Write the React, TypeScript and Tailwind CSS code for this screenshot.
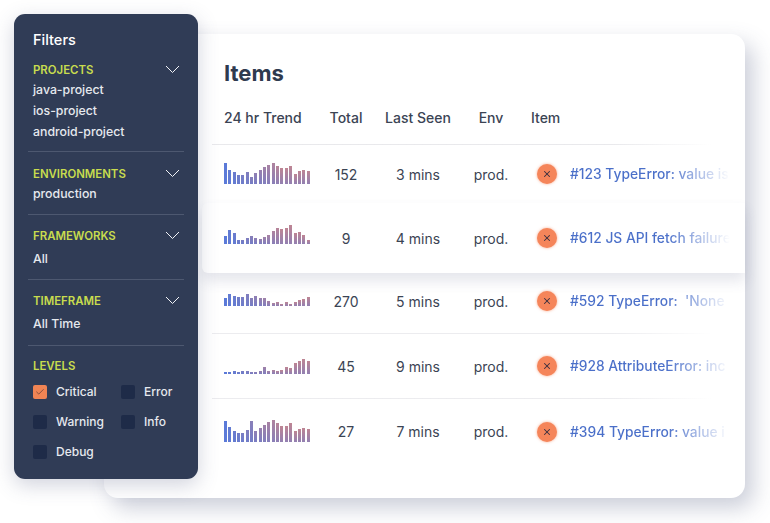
import { X, Check } from 'lucide-react';

interface Row {
    trend: number[];
    total: number;
    seen: string;
    title: string;
    lift: string;
    height: string;
}

const rows: Row[] = [
    { trend: [21, 14, 12, 9, 9, 12, 7, 11, 14, 17, 19, 21, 18, 16, 16, 18, 10, 13, 14, 13], total: 152, seen: '3 mins', title: '#123 TypeError: value is', lift: 'mb-[4px]', height: 'h-[58px]' },
    { trend: [8, 14, 11, 4, 4, 6, 8, 6, 5, 7, 9, 13, 16, 15, 16, 19, 11, 12, 9, 4], total: 9, seen: '4 mins', title: '#612 JS API fetch failure', lift: 'mb-[12px]', height: 'relative z-10 h-[70px] -ml-[22px] pl-[22px] bg-white rounded-l-[6px] shadow-[0_8px_14px_rgba(70,78,120,0.14)]' },
    { trend: [8, 12, 10, 9, 9, 12, 8, 10, 8, 8, 5, 3, 4, 2, 4, 2, 4, 6, 7, 9], total: 270, seen: '5 mins', title: "#592 TypeError:  'None", lift: 'mb-[14px]', height: 'h-[60px] pb-[4px]' },
    { trend: [2, 2, 3, 2, 3, 3, 2, 2, 3, 7, 3, 4, 3, 4, 7, 6, 11, 13, 15, 13], total: 45, seen: '9 mins', title: '#928 AttributeError: inc', lift: 'mb-[8px]', height: 'h-[64px]' },
    { trend: [21, 15, 11, 9, 9, 12, 21, 11, 14, 17, 20, 22, 19, 16, 16, 19, 11, 13, 14, 13], total: 27, seen: '7 mins', title: '#394 TypeError: value i', lift: 'mb-[4px]', height: 'h-[65px]' },
];

function mix(t: number) {
    const r = Math.round(74 + (184 - 74) * t);
    const g = Math.round(108 + (120 - 108) * t);
    const b = Math.round(212 + (136 - 212) * t);
    return `rgb(${r},${g},${b})`;
}

function Trend({ data, className }: { data: number[]; className: string }) {
    return (
        <div className={`flex items-end gap-[1.35px] h-[24px] w-[87px] opacity-90 ${className}`}>
            {data.map((h, i) => {
                const t = Math.min(1, i / 13);
                return (
                    <div
                        key={i}
                        className="w-[3px] shrink-0"
                        style={{ height: h, background: `linear-gradient(to bottom, ${mix(t)}, ${mix(t * 0.55)})` }}
                    />
                );
            })}
        </div>
    );
}

function SectionTitle({ title, className }: { title: string; className: string }) {
    return (
        <div className={`flex items-center justify-between h-[16px] pl-[5px] ${className}`}>
            <span className="mt-[3px] text-[11.4px] font-semibold text-[#c8dc4e]">{title}</span>
            <svg width="15" height="9" viewBox="0 0 15 9" fill="none" className="mr-[4px]">
                <path d="M1 1l6.5 6.5L14 1" stroke="#f1f3f7" strokeWidth="1" />
            </svg>
        </div>
    );
}

function Level({ label, checked }: { label: string; checked?: boolean }) {
    return (
        <div className="flex items-center gap-[9px] h-[30px]">
            <div className={`w-[14px] h-[14px] rounded-[2px] flex items-center justify-center ${checked ? 'bg-[#f08454]' : 'bg-[#1e2b48]'}`}>
                {checked && <Check size={10} strokeWidth={1.5} className="text-[#4a3030]" />}
            </div>
            <span className="text-[12px] font-medium text-[#e6e9ee]">{label}</span>
        </div>
    );
}

function SideList({ items, className }: { items: string[]; className: string }) {
    return (
        <div className={`pl-[5px] flex flex-col gap-[5px] ${className}`}>
            {items.map(s => (
                <p key={s} className="text-[12.3px] leading-[16px] font-medium text-[#e6e9ee]">{s}</p>
            ))}
        </div>
    );
}

export default function App() {
    return (
        <div className="relative w-[770px] h-[523px] bg-white overflow-hidden pt-[34px] pl-[104px] font-['Inter',sans-serif]">
            {/* Items card */}
            <div className="w-[641px] h-[464px] bg-white rounded-[14px] pl-[120px] shadow-[8px_10px_22px_rgba(70,78,120,0.28)]">
                <h1 className="pt-[24px] text-[22px] leading-[30px] font-bold text-[#2f3a4f]">Items</h1>
                <div className="mt-[19px] grid grid-cols-[98px_48px_96px_50px_1fr] items-center h-[18px] text-[14px] font-medium text-[#3b4454]">
                    <span>24 hr Trend</span>
                    <span className="text-center">Total</span>
                    <span className="text-center">Last Seen</span>
                    <span className="text-center">Env</span>
                    <span className="pl-[15px]">Item</span>
                </div>
                <div className="mt-[19px] h-px w-[500px] -ml-[12px] bg-gradient-to-r from-[#e9e9ec] from-80% to-transparent" />
                {rows.map((r, i) => (
                    <div key={r.title}>
                        <div className={`grid grid-cols-[98px_48px_96px_50px_1fr] items-center text-[14px] text-[#3b4454] ${r.height}`}>
                            <Trend data={r.trend} className={r.lift} />
                            <span className="text-center">{r.total}</span>
                            <span className="text-center">{r.seen}</span>
                            <span className="text-center">prod.</span>
                            <div className="flex items-center gap-[13px] pl-[21px]">
                                <div className="w-[20px] h-[20px] rounded-full bg-[#f5855a] flex items-center justify-center shadow-[0_0_3px_rgba(245,133,90,0.7)]">
                                    <X size={10} strokeWidth={2.5} className="text-[#3a3040]" />
                                </div>
                                <span className="mt-[1px] w-[160px] whitespace-pre overflow-hidden text-[13.8px] font-medium text-transparent bg-clip-text bg-gradient-to-r from-[#4a6fc9] from-60% to-transparent">
                                    {r.title}
                                </span>
                            </div>
                        </div>
                        {i >= 2 && i < 4 && (
                            <div className="h-px w-[500px] -ml-[12px] bg-gradient-to-r from-[#ececef] from-80% to-transparent" />
                        )}
                    </div>
                ))}
            </div>

            {/* Filters panel */}
            <aside className="absolute z-20 left-[14px] top-[14px] w-[184px] h-[465px] rounded-[11px] bg-[#303c56] pt-[16px] px-[14px] shadow-[0_6px_20px_rgba(70,78,120,0.25)]">
                <h2 className="pl-[5px] text-[14.5px] leading-[20px] font-medium text-white">Filters</h2>
                <SectionTitle title="PROJECTS" className="mt-[11px]" />
                <SideList items={['java-project', 'ios-project', 'android-project']} className="mt-[5px]" />
                <div className="mt-[11px] h-px bg-[#4d5870]" />
                <SectionTitle title="ENVIRONMENTS" className="mt-[13px]" />
                <SideList items={['production']} className="mt-[5px]" />
                <div className="mt-[12px] h-px bg-[#4d5870]" />
                <SectionTitle title="FRAMEWORKS" className="mt-[12px]" />
                <SideList items={['All']} className="mt-[8px]" />
                <div className="mt-[12px] h-px bg-[#4d5870]" />
                <SectionTitle title="TIMEFRAME" className="mt-[12px]" />
                <SideList items={['All Time']} className="mt-[8px]" />
                <div className="mt-[13px] h-px bg-[#4d5870]" />
                <div className="mt-[12px] pl-[5px] text-[11.4px] leading-[16px] font-semibold text-[#c8dc4e]">LEVELS</div>
                <div className="mt-[3px] pl-[5px] grid grid-cols-[88px_1fr]">
                    <Level label="Critical" checked />
                    <Level label="Error" />
                    <Level label="Warning" />
                    <Level label="Info" />
                    <Level label="Debug" />
                </div>
            </aside>
        </div>
    );
}
